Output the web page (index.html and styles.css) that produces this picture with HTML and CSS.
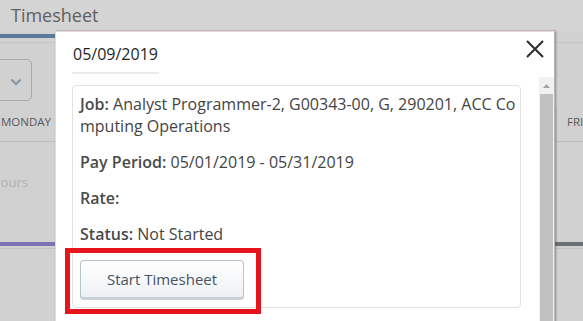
FILE: index.html
```html
<!DOCTYPE html>
<html lang="en">
<head>
<meta charset="utf-8">
<title>Timesheet</title>
<link rel="stylesheet" href="styles.css">
</head>
<body>
<div class="app">
  <div class="topbar"><span class="app-title">Timesheet</span></div>
  <div class="tabs"><div class="tab-active"></div></div>
  <div class="toolbar">
    <div class="dd"><svg width="12" height="8" viewBox="0 0 12 8"><path d="M1.5 1.5 L6 6 L10.5 1.5" fill="none" stroke="#8d9aa6" stroke-width="2.4"/></svg></div>
  </div>
  <div class="row days">
    <div class="cell-left"><span class="day">MONDAY</span></div>
    <div class="cell-mid"></div>
    <div class="cell-right"><span class="day">FRI</span></div>
  </div>
  <div class="row hours">
    <div class="cell-left"><span class="hrs">Hours</span></div>
    <div class="cell-mid"></div>
    <div class="cell-right"></div>
  </div>
  <div class="row totals">
    <div class="bar bar-purple"></div>
    <div class="bar-mid"></div>
    <div class="bar bar-dark"></div>
  </div>
</div>

<div class="modal">
  <div class="modal-head">
    <div class="modal-title">05/09/2019</div>
    <div class="close"><svg width="18" height="18" viewBox="0 0 18 18"><path d="M1 1 L17 17 M17 1 L1 17" stroke="#2b2b2b" stroke-width="2" fill="none"/></svg></div>
  </div>
  <div class="modal-body">
    <div class="scroll-content">
      <div class="info-box">
        <p class="line"><span class="lbl">Job:</span> Analyst Programmer-2, G00343-00, G, 290201, ACC Computing Operations</p>
        <p class="line"><span class="lbl">Pay Period:</span> 05/01/2019 - 05/31/2019</p>
        <p class="line"><span class="lbl">Rate:</span></p>
        <p class="line"><span class="lbl">Status:</span> Not Started</p>
        <div class="btn-wrap">
          <button class="btn">Start Timesheet</button>
          <div class="highlight"></div>
        </div>
      </div>
    </div>
    <div class="scrollbar">
      <div class="sb-up"><svg width="7" height="4" viewBox="0 0 7 4"><path d="M0 4 L3.5 0 L7 4 Z" fill="#a3a3a3"/></svg></div>
      <div class="sb-thumb"></div>
    </div>
  </div>
</div>
</body>
</html>
```
FILE: styles.css
```css
* { box-sizing: border-box; }
html, body { margin: 0; padding: 0; }
body {
  width: 583px;
  height: 321px;
  overflow: hidden;
  background: #d1d1d1;
  font-family: "Open Sans", "Liberation Sans", sans-serif;
  position: relative;
}
.app { width: 583px; }
.topbar {
  height: 32px;
  background: #d4d4d4;
  padding-left: 11px;
  display: flex;
  align-items: center;
}
.app-title {
  font-size: 18px;
  color: #5f5f5f;
  line-height: 22px;
  margin-top: -3px;
}
.tabs {
  height: 11px;
  padding-top: 2px;
  border-bottom: 1px solid #c6c6c6;
  background: #d1d1d1;
}
.tab-active {
  width: 220px;
  height: 4px;
  background: #5b7b9b;
}
.toolbar {
  height: 65px;
  padding-top: 16px;
}
.dd {
  width: 43px;
  height: 42px;
  margin-left: -11px;
  border: 1px solid #a6abb0;
  border-radius: 5px;
  display: flex;
  align-items: center;
  justify-content: center;
  padding-left: 11px;
}
.dd svg { display: block; margin-top: 4px; }
.row {
  display: grid;
  grid-template-columns: 55px 1fr 27px;
}
.days {
  height: 34px;
  border-bottom: 1px solid #bdbdbd;
}
.day {
  font-size: 11.5px;
  color: #5a5a5a;
  line-height: 16px;
  display: block;
  padding-top: 6px;
}
.cell-left { overflow: hidden; padding-left: 1px; }
.cell-right { padding-left: 10px; border-left: 1px solid #c4c4c4; }
.hours { height: 100px; }
.hrs {
  display: block;
  margin-left: -10px;
  margin-top: 31px;
  font-size: 13px;
  color: #b0b0b0;
  white-space: nowrap;
}
.totals {
  height: 7px;
  border-bottom: 1px solid #bcc4c4;
}
.bar { height: 4px; }
.bar-purple { background: #7b73b1; }
.bar-dark { background: #6b7075; }
.bar-mid { height: 4px; background: #7b73b1; }

/* modal */
.modal {
  position: absolute;
  left: 55px;
  top: 31px;
  width: 500px;
  background: #fff;
  border: 1px solid #ead8d8;
  border-right-color: #b5b5b5;
  box-shadow: 1px 0 2px rgba(0, 0, 0, 0.35);
}
.modal-head {
  height: 45px;
  display: flex;
  justify-content: space-between;
  align-items: flex-start;
  padding: 11px 10px 0 16px;
}
.modal-title {
  font-size: 16px;
  line-height: 22px;
  color: #1f1f1f;
  padding-left: 1px;
  padding-bottom: 7px;
  width: 87px;
  border-bottom: 2px solid #ececec;
}
.close { margin-top: -3px; }
.close svg { display: block; }
.modal-body {
  height: 300px;
  overflow: hidden;
  display: flex;
}
.scroll-content {
  flex: 1;
  padding: 8px 18px 0 16px;
}
.scrollbar {
  width: 15px;
  background: #f1f1f1;
  display: flex;
  flex-direction: column;
}
.sb-up {
  height: 17px;
  display: flex;
  justify-content: center;
  padding-top: 7px;
}
.sb-up svg { display: block; }
.sb-thumb {
  flex: 1;
  margin: 0 1px;
  background: #c1c1c1;
}
.info-box {
  border: 1px solid #e2e2e2;
  border-radius: 4px;
  padding: 7px 3px 7px 7px;
}
.line {
  margin: 0 0 14px 0;
  font-size: 16px;
  line-height: 22px;
  color: #444;
  word-break: break-all;
}
.lbl {
  font-weight: 600;
  color: #4a4a4a;
}
.btn-wrap {
  position: relative;
  display: inline-block;
  vertical-align: top;
  margin-top: 1px;
}
.btn {
  display: block;
  width: 164px;
  height: 40px;
  border: 1px solid #b9c3cc;
  border-bottom: 3px solid #c8d1da;
  border-radius: 4px;
  background: linear-gradient(#ffffff, #eef1f4);
  font-family: "Open Sans", "Liberation Sans", sans-serif;
  font-size: 15px;
  font-weight: 400;
  color: #48535f;
  padding: 0;
}
.highlight {
  position: absolute;
  left: -15px;
  top: -12px;
  right: -17px;
  bottom: -14px;
  border: 5px solid #e8141c;
}
```
